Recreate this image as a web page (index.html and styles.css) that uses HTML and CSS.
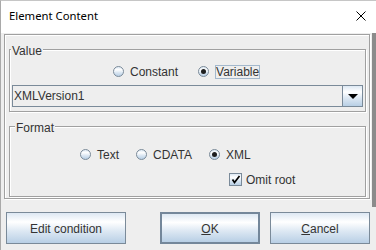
FILE: index.html
```html
<!DOCTYPE html>
<html lang="en">
  <head>
    <meta charset="utf-8" />
    <title>Element Content</title>
    <link rel="stylesheet" href="styles.css">
  </head>

  <body>
    <div class="window">
      <div class="titlebar">
        <span class="title">Element Content</span>
        <svg class="close" width="10" height="10" viewBox="0 0 10 10">
          <path d="M0.5 0.5 L9.5 9.5 M9.5 0.5 L0.5 9.5" stroke="#000" stroke-width="1" fill="none" />
        </svg>
      </div>

      <div class="top">
        <div class="panel">
          <fieldset class="group">
            <legend class="value-legend">Value</legend>
            <div class="options value-options">
              <label class="option"><span class="radio"></span>Constant</label>
              <label class="option"><span class="radio"><span class="dot"></span></span><span class="focus">Variable</span></label>
            </div>
            <div class="combo">
              <span class="combo-text">XMLVersion1</span>
              <span class="combo-button">
                <svg width="10" height="5" viewBox="0 0 10 5"><polygon points="0,0 10,0 5,5" fill="#000" /></svg>
              </span>
            </div>
          </fieldset>

          <fieldset class="group format">
            <legend class="format-legend">Format</legend>
            <div class="options format-options">
              <label class="option"><span class="radio"></span>Text</label>
              <label class="option"><span class="radio"></span>CDATA</label>
              <label class="option"><span class="radio"><span class="dot"></span></span>XML</label>
            </div>
            <div class="check-row">
              <span class="checkbox">
                <svg width="11" height="11" viewBox="0 0 11 11"><path d="M2.5 5.5 L4.5 8.5 L9.5 2" stroke="#000" stroke-width="1.7" fill="none" /></svg>
              </span>
              Omit root
            </div>
          </fieldset>
        </div>
      </div>

      <div class="buttons">
        <button class="btn edit">Edit condition</button>
        <button class="btn ok"><u>O</u>K</button>
        <button class="btn cancel"><u>C</u>ancel</button>
      </div>
    </div>
  </body>
</html>
```

FILE: styles.css
```css
body {
  margin: 0;
  background: #eeeeee;
  color: #333333;
  font: 12px "Liberation Sans", Arial, sans-serif;
}

.window {
  box-sizing: border-box;
  width: 376px;
  height: 250px;
  overflow: hidden;
  background: #eeeeee;
  border-top: 1px solid #c6c6c6;
  border-left: 1px solid #a9a9a9;
}

.titlebar {
  box-sizing: border-box;
  display: flex;
  align-items: center;
  justify-content: space-between;
  height: 32px;
  padding: 0 10px 3px 8px;
  background: #ffffff;
  color: #000000;
  font-family: "Noto Sans", sans-serif;
  font-size: 11.3px;
}

.top {
  display: flex;
  padding: 1px 0 8px 3px;
  border-right: 4px solid #8b8b8b;
}

.panel {
  box-sizing: border-box;
  width: 366px;
  padding: 5px 3px 1px 4px;
  border: 1px solid #a0a0a0;
  box-shadow: inset 1px 1px 0 #ffffff, 1px 1px 0 #ffffff;
}

.group {
  min-width: 0;
  margin: 0;
  padding: 0 0 4px;
  border: 1px solid #a0a0a0;
  box-shadow: inset 1px 1px 0 #ffffff, 1px 1px 0 #ffffff;
}

.group legend {
  padding: 4px 1px 0;
  line-height: 14px;
  background: #eeeeee;
}

.value-legend {
  margin-left: 1px;
}

.format {
  margin-top: 5px;
  padding-bottom: 7px;
}

.format-legend {
  margin-left: 5px;
}

.options {
  display: flex;
  align-items: center;
  height: 19px;
}

.value-options {
  gap: 20px;
  margin-top: 4px;
  padding-left: 103px;
}

.format-options {
  gap: 17px;
  margin-top: 10px;
  padding-left: 70px;
}

.option {
  display: flex;
  align-items: center;
  line-height: 14px;
}

.radio {
  box-sizing: border-box;
  display: flex;
  align-items: center;
  justify-content: center;
  width: 11px;
  height: 11px;
  margin-right: 6px;
  border: 1px solid #7a8a99;
  border-radius: 50%;
  background: linear-gradient(#dde8f3, #ffffff 30%, #dde8f3 60%, #b8cfe5);
}

.dot {
  width: 5px;
  height: 5px;
  border-radius: 50%;
  background: #1e1e1e;
}

.focus {
  line-height: 12px;
  border: 1px solid #a3b8cc;
}

.combo {
  box-sizing: border-box;
  display: flex;
  height: 22px;
  margin: 4px 2px 0;
  border: 1px solid #7a8a99;
  background: #eeeeee;
}

.combo-text {
  flex: 1;
  display: flex;
  align-items: center;
  padding-left: 1px;
}

.combo-button {
  display: flex;
  align-items: center;
  justify-content: center;
  width: 19px;
  border-left: 1px solid #7a8a99;
  background: linear-gradient(#dde8f3, #ffffff 30%, #dde8f3 60%, #b8cfe5);
}

.check-row {
  display: flex;
  align-items: center;
  height: 19px;
  margin-top: 6px;
  padding-left: 219px;
}

.checkbox {
  box-sizing: border-box;
  display: flex;
  width: 13px;
  height: 13px;
  margin-right: 4px;
  border: 1px solid #7a8a99;
  background: linear-gradient(#dde8f3, #ffffff 30%, #dde8f3 60%, #b8cfe5);
}

.buttons {
  display: flex;
  margin-top: 5px;
  padding-left: 5px;
}

.btn {
  box-sizing: border-box;
  display: flex;
  align-items: center;
  justify-content: center;
  height: 32px;
  margin: 0;
  padding: 1px 0 0;
  border: 1px solid #7a8a99;
  background: linear-gradient(#dde8f3, #ffffff 30%, #dde8f3 60%, #b8cfe5);
  color: #333333;
  font: inherit;
}

.edit {
  width: 120px;
}

.ok {
  width: 100px;
  margin-left: 34px;
  border: 2px solid #74879a;
}

.cancel {
  width: 100px;
  margin-left: 10px;
}
```
